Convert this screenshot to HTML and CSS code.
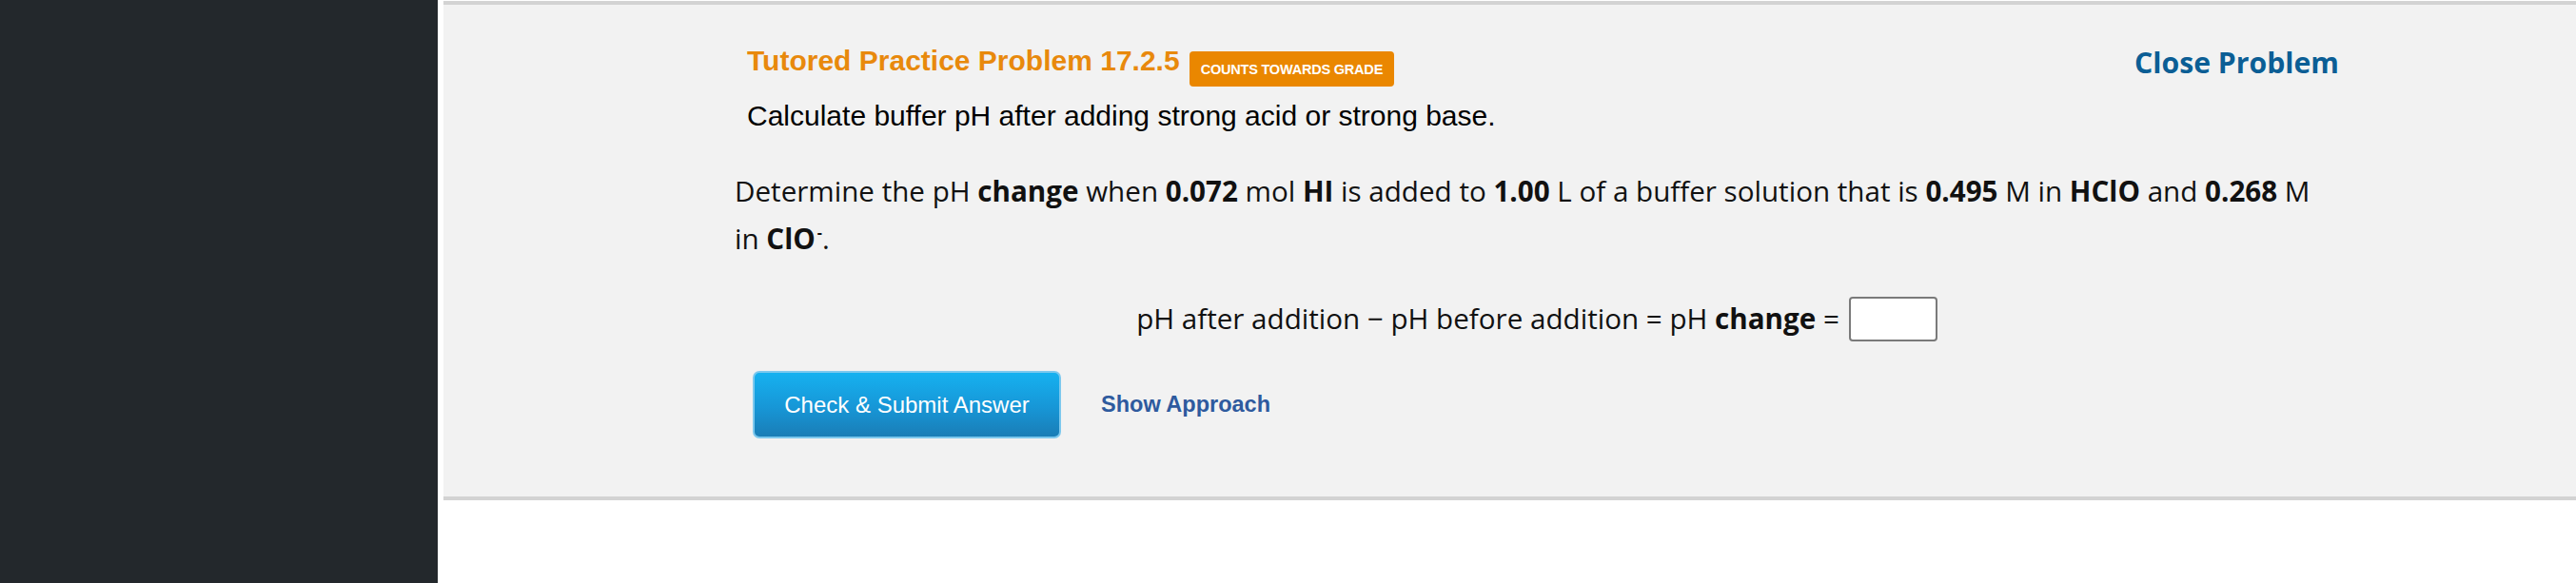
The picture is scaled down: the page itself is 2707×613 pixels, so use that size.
FILE: index.html
```html
<!DOCTYPE html>
<html lang="en">
<head>
<meta charset="utf-8">
<title>Tutored Practice Problem 17.2.5</title>
<link rel="stylesheet" href="styles.css">
</head>
<body>
  <aside class="sidebar"></aside>
  <main class="main">
    <section class="panel">
      <div class="content">
        <header class="header">
          <div class="header-left">
            <div class="title-row">
              <h1 class="title">Tutored Practice Problem 17.2.5</h1>
              <span class="badge">COUNTS TOWARDS GRADE</span>
            </div>
            <p class="subtitle">Calculate buffer pH after adding strong acid or strong base.</p>
          </div>
          <a class="close-link" href="#">Close Problem</a>
        </header>
        <p class="problem">Determine the pH <b>change</b> when <b>0.072</b> mol <b>HI</b> is added to <b>1.00</b> L of a buffer solution that is <b>0.495</b> M in <b>HClO</b> and <b>0.268</b> M in <b>ClO</b><sup class="charge">-</sup>.</p>
        <div class="equation">
          <span class="eq-text">pH after addition &minus; pH before addition = pH <b>change</b> =</span>
          <input class="answer" type="text" aria-label="pH change">
        </div>
        <div class="actions">
          <button class="submit" type="button">Check &amp; Submit Answer</button>
          <a class="approach" href="#">Show Approach</a>
        </div>
      </div>
    </section>
  </main>
</body>
</html>
```

FILE: styles.css
```css
* { box-sizing: border-box; }

html, body {
  margin: 0;
  padding: 0;
  height: 100%;
}

body {
  display: flex;
  min-height: 613px;
  background: #ffffff;
  font-family: "Open Sans", "Liberation Sans", sans-serif;
  color: #111111;
}

.sidebar {
  width: 460px;
  flex: 0 0 460px;
  background: #23282c;
}

.main {
  flex: 1;
  margin-left: 6px;
  padding-top: 1px;
}

.panel {
  background: #f2f2f2;
  border-top: 4px solid #d3d3d3;
  border-bottom: 4px solid #d3d3d3;
  padding: 41px 249px 61px 306px;
}

.content {
  width: 1686px;
}

.header {
  display: flex;
  justify-content: space-between;
  align-items: flex-start;
}

.header-left {
  padding-left: 13px;
}

.title-row {
  display: flex;
  align-items: flex-start;
  height: 45px;
}

.title {
  margin: 0;
  font-family: "Liberation Sans", Arial, sans-serif;
  font-weight: 700;
  font-size: 30px;
  line-height: 36px;
  color: #e8890c;
}

.badge {
  margin-left: 10px;
  margin-top: 8px;
  height: 37px;
  line-height: 39px;
  padding: 0 12px;
  border-radius: 4px;
  background: #ea8700;
  color: #ffffff;
  font-family: "Liberation Sans", Arial, sans-serif;
  font-weight: 700;
  font-size: 14.5px;
  letter-spacing: -0.2px;
}

.subtitle {
  margin: 13px 0 0;
  font-family: "Liberation Sans", Arial, sans-serif;
  font-size: 30px;
  line-height: 36px;
  color: #000000;
}

.close-link {
  margin-top: 0;
  font-family: "Open Sans", sans-serif;
  font-weight: 700;
  font-size: 30.2px;
  line-height: 40px;
  color: #0b5e95;
  text-decoration: none;
}

.problem {
  margin: 36px 0 0;
  font-size: 29.6px;
  line-height: 50px;
  color: #111111;
}

.problem b, .eq-text b {
  font-weight: 700;
}

.charge {
  font-size: 16px;
  font-weight: 700;
  line-height: 1;
  margin-left: 2px;
  vertical-align: 12px;
}

.equation {
  margin-top: 34px;
  height: 50px;
  display: flex;
  justify-content: center;
  align-items: center;
  gap: 10px;
}

.eq-text {
  font-size: 29.6px;
  line-height: 50px;
  color: #111111;
}

.answer {
  width: 93px;
  height: 47px;
  border: 2px solid #7a7a7a;
  border-radius: 4px;
  background: #ffffff;
  margin: 0;
  padding: 0 6px;
  font-size: 24px;
}

.actions {
  margin-top: 30px;
  padding-left: 19px;
  display: flex;
  align-items: center;
  gap: 42px;
}

.submit {
  width: 324px;
  height: 71px;
  margin: 0;
  border: 2px solid #7cc8ee;
  border-radius: 7px;
  background: linear-gradient(to bottom, #16b1f0 0%, #1796d6 55%, #1a7db6 100%);
  color: #ffffff;
  font-family: "Liberation Sans", Arial, sans-serif;
  font-size: 24px;
  padding: 0;
  cursor: pointer;
}

.approach {
  font-family: "Liberation Sans", Arial, sans-serif;
  font-weight: 700;
  font-size: 23.5px;
  color: #2e5a9e;
  text-decoration: none;
}
```
